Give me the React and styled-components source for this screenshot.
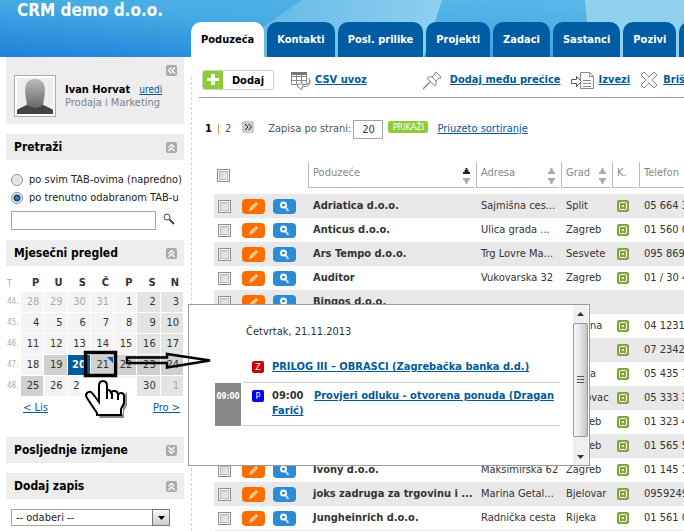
import React from "react";
import styled, { createGlobalStyle } from "styled-components";

const GlobalStyle = createGlobalStyle`
  * {
    box-sizing: border-box;
  }
  body {
    margin: 0;
    background: #fff;
    color: #333;
    font-family: Tahoma, "DejaVu Sans Condensed", "DejaVu Sans", sans-serif;
    font-size: 11px;
    line-height: 14px;
  }
  button, input, select {
    font-family: inherit;
    font-size: 11px;
    margin: 0;
  }
  a {
    color: #005a9c;
  }
`;

const Page = styled.div`
  position: relative;
  height: 100vh;
  display: flex;
  flex-direction: column;
  overflow: hidden;
`;

/* header */
const Header = styled.header`
  position: relative;
  flex: none;
  display: grid;
  grid-template-columns: 191px 1fr;
  height: 57px;
  overflow: hidden;
`;
const Sky = styled.svg`
  position: absolute;
  left: 0;
  top: 0;
  width: 100%;
  height: 100%;
`;
const Brand = styled.h1`
  position: relative;
  margin: 0;
  padding-left: 17px;
  color: #fff;
  font-size: 17px;
  line-height: 20px;
  white-space: nowrap;
`;
const Tabs = styled.nav`
  position: relative;
  display: flex;
  align-items: flex-end;
  gap: 3px;
  min-width: 0;
`;
const Tab = styled.a`
  flex: none;
  height: 35px;
  padding: 0 10px;
  border-radius: 10px 10px 0 0;
  background: ${(p) => (p.$active ? "#fff" : "#005da3")};
  color: ${(p) => (p.$active ? "#000" : "#fff")};
  font-weight: bold;
  line-height: 36px;
  text-decoration: none;
  white-space: nowrap;
`;

const Body = styled.div`
  flex: 1;
  display: flex;
  min-height: 0;
`;

/* sidebar */
const Sidebar = styled.aside`
  flex: none;
  width: 191px;
  padding: 0 7px 0 6px;
`;
const UserBox = styled.section`
  display: flex;
  align-items: flex-start;
  height: 67px;
  padding: 18px 7px 0 8px;
  background: #ededed;
`;
const Avatar = styled.svg`
  flex: none;
  width: 42px;
  height: 42px;
  padding: 1px;
  border: 1px solid #aaa;
  background: #fff;
`;
const UserText = styled.div`
  flex: 1;
  padding: 8px 0 0 9px;
  line-height: 13px;
  color: #80808c;
  white-space: nowrap;
  a {
    margin-left: 6px;
    font-size: 10px;
  }
  strong {
    color: #000;
  }
`;
const ToggleButton = styled.button`
  flex: none;
  width: 11px;
  height: 11px;
  padding: 0;
  border: 0;
  border-radius: 2px;
  background: #aaa;
  color: #fff;
  svg {
    display: block;
    transform: rotate(${(p) => p.$turn || 0}deg);
  }
`;
const UserToggle = styled.div`
  width: 11px;
  margin: -10px 0 0 -11px;
`;
const PanelHead = styled.header`
  display: flex;
  align-items: center;
  justify-content: space-between;
  height: 26px;
  margin-top: 10px;
  padding: 0 7px 0 8px;
  background: #ededed;
`;
const PanelTitle = styled.h2`
  margin: 0;
  color: #000;
  font-size: 12px;
  line-height: 16px;
`;
const SearchForm = styled.form`
  display: flex;
  flex-wrap: wrap;
  align-items: center;
  padding: 11px 0 0 5px;
`;
const RadioLabel = styled.label`
  display: flex;
  align-items: center;
  width: 100%;
  height: 18px;
  gap: 6px;
  color: #222;
  white-space: nowrap;
`;
const Radio = styled.input`
  appearance: none;
  width: 12px;
  height: 12px;
  border: 1px solid #8e8f8f;
  border-radius: 50%;
  background: radial-gradient(circle, #ddd, #f4f4f4);
  &:checked {
    background: radial-gradient(circle, #4aa5df 0, #0c3c78 3px, #eee 4px);
  }
`;
const SearchInput = styled.input`
  width: 145px;
  height: 19px;
  margin: 4px 7px 0 0;
  border: 1px solid #a5a5b0;
`;
const IconButton = styled.button`
  width: 12px;
  height: 12px;
  padding: 0;
  border: 0;
  background: none;
  svg {
    display: block;
  }
`;

/* calendar */
const CalendarTable = styled.table`
  width: 100%;
  margin-top: 8px;
  table-layout: fixed;
  border-spacing: 1px;
  font-size: 11px;
  th {
    height: 16px;
    padding: 0 4px 0 0;
    text-align: right;
    color: #333;
  }
  th:first-child {
    width: 13px;
    padding: 0;
    color: #aaa;
    font-weight: normal;
    text-align: left;
    font-size: 9px;
  }
`;
const dayColors = {
  off: ["#f4f4f4", "#aaa"],
  day: ["#f4f4f4", "#333"],
  weekend: ["#e4e4e4", "#333"],
  weekendOff: ["#e4e4e4", "#aaa"],
  busy: ["#d0d0d0", "#333"],
  today: ["#005a9c", "#fff"],
};
const Day = styled.td`
  position: relative;
  height: 20px;
  padding: 0 4px 0 0;
  text-align: right;
  background: ${(p) => dayColors[p.$kind][0]};
  color: ${(p) => dayColors[p.$kind][1]};
  font-weight: ${(p) => (p.$kind === "today" ? "bold" : "normal")};
`;
const Week = styled.td`
  padding: 0;
  color: #aaa;
  font-size: 8px;
`;
const Marker = styled.svg`
  position: absolute;
  left: -7px;
  top: -6px;
  width: 130px;
  height: 72px;
  overflow: visible;
  z-index: 5;
  pointer-events: none;
`;
const MonthNav = styled.div`
  display: flex;
  justify-content: space-between;
  padding: 4px 4px 0 17px;
  margin-bottom: 22px;
`;
const AddSelect = styled.select`
  display: block;
  appearance: none;
  width: 159px;
  height: 17px;
  padding: 0 4px;
  color: #222;
  border: 1px solid #a5a5b0;
  border-radius: 0;
  background: #fff;
`;
const SelectWrap = styled.div`
  display: grid;
  width: 159px;
  margin: 10px 0 0 5px;
  > * {
    grid-area: 1 / 1;
  }
`;
const SelectArrow = styled.span`
  display: flex;
  align-items: center;
  justify-content: center;
  justify-self: end;
  width: 18px;
  height: 17px;
  border: 1px solid #777;
  background: linear-gradient(#f8f8f8, #ccc);
  z-index: 1;
  pointer-events: none;
`;

/* main */
const Main = styled.main`
  flex: 1;
  min-width: 0;
  margin-top: 20px;
  padding-left: 7px;
  border-left: 1px dashed #d4d4d4;
`;
const Toolbar = styled.div`
  display: flex;
  align-items: center;
  height: 41px;
  margin-top: -20px;
  padding: 6px 0 0 3px;
  border-bottom: 1px solid #999;
  overflow: hidden;
`;
const AddButton = styled.button`
  flex: none;
  display: flex;
  align-items: center;
  width: 72px;
  height: 20px;
  padding: 0;
  border: 1px solid #ccc;
  border-radius: 3px;
  background: #fff;
  color: #000;
  font-weight: bold;
  overflow: hidden;
  svg {
    flex: none;
    background: #8fcc33;
  }
  span {
    flex: 1;
  }
`;
const Tool = styled.a`
  flex: none;
  display: flex;
  align-items: center;
  gap: ${(p) => p.$gap || 4}px;
  margin-left: ${(p) => p.$left}px;
  font-weight: bold;
  white-space: nowrap;
`;
const Pager = styled.div`
  display: flex;
  align-items: center;
  height: 20px;
  margin-top: 21px;
  padding-left: 6px;
  white-space: nowrap;
  color: #555;
  b {
    color: #000;
  }
  i {
    width: 1px;
    height: 10px;
    margin: 0 6px;
    background: #e0953c;
  }
`;
const NextButton = styled.button`
  width: 12px;
  height: 12px;
  margin: -4px 14px 0 11px;
  padding: 0;
  border: 0;
  border-radius: 2px;
  background: #ccc;
  svg {
    display: block;
  }
`;
const CountInput = styled.input`
  width: 30px;
  height: 19px;
  margin: 0 5px 0 2px;
  padding: 0;
  border: 1px solid #a5a5b0;
  color: #333;
  text-align: center;
`;
const ShowButton = styled.button`
  width: 40px;
  height: 12px;
  margin: -4px 9px 0 0;
  padding: 0;
  border: 0;
  border-radius: 2px;
  background: #8fcc33;
  color: #fff;
  && {
    font-size: 9px;
  }
  line-height: 12px;
`;
const TableWrap = styled.div`
  margin: 23px 0 0 15px;
  overflow: hidden;
`;
const Table = styled.table`
  width: 585px;
  table-layout: fixed;
  border-collapse: collapse;
`;
const Th = styled.th`
  width: ${(p) => p.$w}px;
  height: 32px;
  padding: 0 2px 6px 0;
  font-weight: normal;
  text-align: left;
`;
const HeadCell = styled.div`
  display: flex;
  justify-content: space-between;
  height: 26px;
  padding: 4px 4px 0 4px;
  border-left: 1px solid #bbb;
  border-bottom: 1px solid #bbb;
  color: #888;
`;
const Row = styled.tr`
  height: 24px;
  background: ${(p) => (p.$odd ? "#e8e8e8" : "#fff")};
  td {
    padding: 0 0 0 5px;
    white-space: nowrap;
    overflow: hidden;
  }
  td:nth-child(-n + 3) {
    padding-left: 4px;
  }
  svg {
    display: block;
  }
`;
const Name = styled.td`
  font-weight: bold;
`;
const CheckBox = styled.input`
  appearance: none;
  display: block;
  width: 13px;
  height: 13px;
  border: 1px solid #8e8f8f;
  background: linear-gradient(135deg, #ccc, #f6f6f6);
  box-shadow: inset 0 0 0 1px #f4f4f4, inset 0 0 0 2px #bbb;
`;
const HeadCheck = styled.div`
  padding-left: 3px;
`;
const RowButton = styled.button`
  display: flex;
  align-items: center;
  justify-content: center;
  width: 23px;
  height: 15px;
  padding: 0;
  border: 0;
  border-radius: 4px;
  background: ${(p) => p.$color};
`;

/* day popup */
const Popup = styled.section`
  position: absolute;
  left: 188px;
  top: 304px;
  z-index: 3;
  display: flex;
  width: 402px;
  height: 162px;
  border: 1px solid #999;
  background: #fff;
`;
const PopupBody = styled.div`
  flex: 1;
  padding: 20px 13px 0 26px;
`;
const PopupDate = styled.p`
  margin: 0 0 15px 31px;
`;
const Task = styled.div`
  display: grid;
  grid-template-columns: 26px 1fr;
  gap: 2px;
`;
const TaskTime = styled.span`
  padding-top: 7px;
  background: ${(p) => (p.$on ? "#888" : "none")};
  color: #fff;
  font-size: 8px;
  font-weight: bold;
  text-align: center;
`;
const TaskText = styled.div`
  display: flex;
  gap: 8px;
  padding: ${(p) => (p.$tall ? "5px 0 7px 9px" : "5px 0 8px 9px")};
  border-bottom: 1px solid #ccc;
  font-weight: bold;
  line-height: 15px;
  span {
    margin-right: 7px;
  }
`;
const Tag = styled.i`
  flex: none;
  width: 12px;
  height: 12px;
  margin-top: 2px;
  border-radius: 2px;
  background: ${(p) => p.$color};
  color: #fff;
  font-size: 9px;
  font-style: normal;
  font-weight: normal;
  line-height: 12px;
  text-align: center;
`;
const ScrollBar = styled.div`
  display: flex;
  flex-direction: column;
  width: 15px;
  margin-right: 1px;
  background: #f0f0f0;
  svg {
    flex: none;
    display: block;
  }
`;
const Thumb = styled.div`
  flex: 1;
  display: flex;
  align-items: center;
  justify-content: center;
  border: 1px solid #999;
  border-radius: 2px;
  background: linear-gradient(90deg, #f6f6f6, #e8e8e8 45%, #c4c4c4);
`;

const tabs = ["Poduzeća", "Kontakti", "Posl. prilike", "Projekti", "Zadaci", "Sastanci", "Pozivi", ""];

const weeks = [
  ["44.", ["28", "off"], ["29", "off"], ["30", "off"], ["31", "off"], ["1", "day"], ["2", "weekend"], ["3", "weekend"]],
  ["45.", ["4", "day"], ["5", "day"], ["6", "day"], ["7", "day"], ["8", "day"], ["9", "weekend"], ["10", "weekend"]],
  ["46.", ["11", "day"], ["12", "day"], ["13", "day"], ["14", "day"], ["15", "day"], ["16", "weekend"], ["17", "weekend"]],
  ["47.", ["18", "day"], ["19", "busy"], ["20", "today"], ["21", "busy"], ["22", "busy"], ["23", "busy"], ["24", "busy"]],
  ["48.", ["25", "busy"], ["26", "day"], ["27", "day"], ["28", "day"], ["29", "day"], ["30", "weekend"], ["1", "weekendOff"]],
];

const companies = [
  ["Adriatica d.o.o.", "Sajmišna ces...", "Split", "05 664 3"],
  ["Anticus d.o.o.", "Ulica grada ...", "Zagreb", "01 560 0"],
  ["Ars Tempo d.o.o.", "Trg Lovre Ma...", "Sesvete", "095 8690"],
  ["Auditor", "Vukovarska 32", "Zagreb", "01 / 30 4"],
  ["Bingos d.o.o.", "", "", ""],
  ["", "", "Gradna", "04 1231"],
  ["", "", "", "07 2342"],
  ["", "", "Rijeka", "05 435 7"],
  ["", "", "Karlovac", "05 333 3"],
  ["", "", "Zagreb", "01 323 4"],
  ["", "", "Zagreb", "01 565 5"],
  ["Ivony d.o.o.", "Maksimirska 62", "Zagreb", "01 145 1"],
  ["joks zadruga za trgovinu i ...", "Marina Getal...", "Bjelovar", "0959249"],
  ["Jungheinrich d.o.o.", "Radnička cesta", "Rijeka", "01 561 0"],
  ["", "", "", ""],
];

function Toggle({ turn, label }) {
  return (
    <ToggleButton $turn={turn} aria-label={label}>
      <svg width="11" height="11" fill="none" stroke="currentColor" strokeWidth="1.4">
        <path d="M2.5 5.5 5.5 2.5 8.5 5.5M2.5 9 5.5 6 8.5 9" />
      </svg>
    </ToggleButton>
  );
}

function Panel({ title, closed, children }) {
  return (
    <section>
      <PanelHead>
        <PanelTitle>{title}</PanelTitle>
        <Toggle turn={closed ? 180 : 0} label={title} />
      </PanelHead>
      {children}
    </section>
  );
}

function Sort({ up }) {
  return (
    <svg width="7" height="20" fill="#aaa">
      <path d="M2.5 2h2v2h1v2h1.5v2H0V6h1.5V4h1z" fill={up ? "#222" : "#aaa"} />
      <path d="M0 12h7v2H5.500v2h-1v2h-2v-2h-1v-2H0z" />
    </svg>
  );
}

function DayMarker() {
  return (
    <Marker viewBox="0 0 130 72">
      <path d="M23 8h6v6z" fill="#005a9c" />
      <path d="M-4 29h57v43H-4z" fill="#fff" />
      <rect x="1.500" y="3.500" width="30" height="23" fill="none" stroke="#000" strokeWidth="3.500" />
      <path d="M43 8.500h40V5l43 6.500-43 7v-4.500H43z" fill="none" stroke="#000" strokeWidth="2.500" />
      <g transform="translate(0 -2)">
        <path d="M14 67h25V52l4-8v14l-3 6v7H16z" fill="#888" />
        <path
          d="M19 34q-4 0-4 5v16l-6-8q-3-4-6-1-2 2 0 5l10 15v2h24v-6l3-6V49q0-3-3-3-2 0-3 2 0-4-4-4-3 0-3 3 0-4-3-4-1 0-1 2v-6q0-5-4-5z"
          fill="#fff"
          stroke="#000"
          strokeWidth="2"
        />
        <path d="M23 43v9M28 46v6M34 48v5" stroke="#000" strokeWidth="2" />
      </g>
    </Marker>
  );
}

function Calendar() {
  return (
    <>
      <CalendarTable>
        <thead>
          <tr>
            {["T", "P", "U", "S", "Č", "P", "S", "N"].map((d, i) => (
              <th key={i}>{d}</th>
            ))}
          </tr>
        </thead>
        <tbody>
          {weeks.map(([week, ...days]) => (
            <tr key={week}>
              <Week>{week}</Week>
              {days.map(([n, kind]) => (
                <Day key={n} $kind={kind}>
                  {n}
                  {n === "21" && <DayMarker />}
                </Day>
              ))}
            </tr>
          ))}
        </tbody>
      </CalendarTable>
      <MonthNav>
        <a href="#lis">&lt; Lis</a>
        <a href="#pro">Pro &gt;</a>
      </MonthNav>
    </>
  );
}

function Companies() {
  return (
    <TableWrap>
      <Table>
        <thead>
          <tr>
            <Th $w={24}>
              <HeadCheck>
                <CheckBox type="checkbox" aria-label="Sve" />
              </HeadCheck>
            </Th>
            <Th $w={31} />
            <Th $w={39} />
            <Th $w={168}>
              <HeadCell>
                Poduzeće <Sort up />
              </HeadCell>
            </Th>
            <Th $w={85}>
              <HeadCell>
                Adresa <Sort />
              </HeadCell>
            </Th>
            <Th $w={51}>
              <HeadCell>
                Grad <Sort />
              </HeadCell>
            </Th>
            <Th $w={27}>
              <HeadCell>K.</HeadCell>
            </Th>
            <Th $w={160}>
              <HeadCell>Telefon</HeadCell>
            </Th>
          </tr>
        </thead>
        <tbody>
          {companies.map(([name, address, city, phone], i) => (
            <Row key={i} $odd={i % 2 === 0}>
              <td>
                <CheckBox type="checkbox" aria-label={name || "Odaberi"} />
              </td>
              <td>
                <RowButton $color="#ff6d00" aria-label="Uredi">
                  <svg width="11" height="11">
                    <path d="M1 10 2 7 8 1 10 3 4 9z" fill="#ffe4c4" />
                    <path d="M3 8 8.500 2.500" stroke="#ff9a4a" />
                  </svg>
                </RowButton>
              </td>
              <td>
                <RowButton $color="#2b8bd6" aria-label="Pregled">
                  <svg width="11" height="11" fill="none" stroke="#fff">
                    <circle cx="4.500" cy="4" r="2.500" strokeWidth="2" />
                    <path d="M6.500 6.500 9.500 10" strokeWidth="2" stroke="#b8dcf6" />
                  </svg>
                </RowButton>
              </td>
              <Name>{name}</Name>
              <td>{address}</td>
              <td>{city}</td>
              <td>
                {phone && (
                  <svg width="12" height="12" fill="none">
                    <rect width="12" height="12" rx="2" fill="#82a53c" />
                    <rect x="2.500" y="2.500" width="7" height="7" rx="1" stroke="#fff" />
                    <rect x="5" y="5" width="2" height="2" fill="#fff" />
                  </svg>
                )}
              </td>
              <td>{phone}</td>
            </Row>
          ))}
        </tbody>
      </Table>
    </TableWrap>
  );
}

function DayPopup() {
  return (
    <Popup>
      <PopupBody>
        <PopupDate>Četvrtak, 21.11.2013</PopupDate>
        <Task>
          <TaskTime />
          <TaskText>
            <Tag $color="#c00">Z</Tag>
            <a href="#prilog">PRILOG III – OBRASCI (Zagrebačka banka d.d.)</a>
          </TaskText>
        </Task>
        <Task>
          <TaskTime $on>09:00</TaskTime>
          <TaskText $tall>
            <Tag $color="#00f">P</Tag>
            <div>
              <span>09:00</span>{" "}
              <a href="#ponuda">Provjeri odluku - otvorena ponuda (Dragan Farić)</a>
            </div>
          </TaskText>
        </Task>
      </PopupBody>
      <ScrollBar>
        <svg width="15" height="18">
          <path d="M4 11h7L7.500 7z" fill="#333" />
        </svg>
        <Thumb>
          <svg width="7" height="8" stroke="#555">
            <path d="M0 .5h7M0 3.500h7M0 6.500h7" />
          </svg>
        </Thumb>
        <svg width="15" height="28">
          <path d="M4 18h7L7.500 22z" fill="#333" />
        </svg>
      </ScrollBar>
    </Popup>
  );
}

function App() {
  return (
    <Page>
      <GlobalStyle />
      <Header>
        <Sky viewBox="0 0 684 57" preserveAspectRatio="none">
          <defs>
            <linearGradient id="sky" x1="0" x2="1" y1="1" y2="0">
              <stop offset="0" stopColor="#1f80da" />
              <stop offset=".5" stopColor="#45abe3" />
              <stop offset="1" stopColor="#5cbae8" />
            </linearGradient>
            <linearGradient id="beam" x1="0" x2="1">
              <stop offset="0" stopColor="#5cb5e6" />
              <stop offset="1" stopColor="#8dcfef" />
            </linearGradient>
          </defs>
          <path d="M0 0h684v57H0z" fill="url(#sky)" />
          <path d="M302 0h140l-18 57H220z" fill="url(#beam)" />
          <path d="M585 0h99v57h-94z" fill="#90d0ef" />
        </Sky>
        <Brand>CRM demo d.o.o.</Brand>
        <Tabs>
          {tabs.map((tab, i) => (
            <Tab key={i} href={"#tab" + i} $active={i === 0}>
              {tab}
            </Tab>
          ))}
        </Tabs>
      </Header>
      <Body>
        <Sidebar>
          <UserBox>
            <Avatar viewBox="0 0 38 38">
              <defs>
                <linearGradient id="face" x1="0" x2="0" y1="0" y2="1">
                  <stop offset="0" stopColor="#bbb" />
                  <stop offset="1" stopColor="#555" />
                </linearGradient>
              </defs>
              <path d="M1 1h36v36H1z" fill="#eee" />
              <path d="M1 37v-4q5-3 10-5l-1-6Q6 2 19 2t9 20l-1 6q5 2 10 5v4z" fill="url(#face)" />
              <path d="M1 37v-4q5-3 10-5 8 6 16 0 5 2 10 5v4z" fill="#444" />
            </Avatar>
            <UserText>
              <strong>Ivan Horvat</strong> <a href="#uredi">uredi</a>
              <div>Prodaja i Marketing</div>
            </UserText>
            <UserToggle>
              <Toggle turn={-90} label="Sakrij" />
            </UserToggle>
          </UserBox>
          <Panel title="Pretraži">
            <SearchForm>
              <RadioLabel>
                <Radio type="radio" name="scope" />
                po svim TAB-ovima (napredno)
              </RadioLabel>
              <RadioLabel>
                <Radio type="radio" name="scope" defaultChecked />
                po trenutno odabranom TAB-u
              </RadioLabel>
              <SearchInput aria-label="Pretraži" />
              <IconButton type="button" aria-label="Traži">
                <svg width="12" height="12" fill="none" stroke="#444">
                  <circle cx="4" cy="4" r="3" />
                  <path d="M6.500 6.500 11 11" strokeWidth="2" />
                </svg>
              </IconButton>
            </SearchForm>
          </Panel>
          <Panel title="Mjesečni pregled">
            <Calendar />
          </Panel>
          <Panel title="Posljednje izmjene" closed />
          <Panel title="Dodaj zapis">
            <SelectWrap>
              <AddSelect aria-label="Dodaj zapis">
                <option>-- odaberi --</option>
              </AddSelect>
              <SelectArrow>
                <svg width="7" height="4">
                  <path d="M0 0h7L3.500 4z" />
                </svg>
              </SelectArrow>
            </SelectWrap>
          </Panel>
        </Sidebar>
        <Main>
          <Toolbar>
            <AddButton>
              <svg width="20" height="20">
                <path d="M8 4h4v4h4v3h-4v4H8v-4H4V8h4z" fill="#fff" />
              </svg>
              <span>Dodaj</span>
            </AddButton>
            <Tool href="#csv" $left={17}>
              <svg width="20" height="19" fill="none" stroke="#888">
                <path d="M.5 1.500h15v12H.5zM.5 5.500h15M.5 9.500h15M5.500 2v11M10.500 2v11" />
                <path d="M0 1h16v3H0z" fill="#777" stroke="none" />
                <path d="M18 7q3 7-7 7v-3l-5 4 5 4v-3q9 0 8-7" fill="#fff" />
              </svg>
              CSV uvoz
            </Tool>
            <Tool href="#precice" $left={56} $gap={8}>
              <svg width="19" height="19" fill="#fff" stroke="#888">
                <path d="M0 18 7 11" strokeWidth="1.500" />
                <path d="M4 7q2-2 5-1l3-3q-1-2 1-2l5 5q0 2-2 1l-3 3q1 3-1 5z" />
                <path d="M9 6l4 4" />
              </svg>
              Dodaj među prećice
            </Tool>
            <Tool href="#izvezi" $left={10}>
              <svg width="24" height="19" fill="#fff" stroke="#888">
                <path d="M9.500 1.500h9l4 4v12h-13zM18.500 1.500v4h4M12 9.500h8M12 12.500h8M12 15.500h8" />
                <path d="M.5 8.500h5v-3l5 5-5 5v-3h-5z" stroke="#555" />
              </svg>
              Izvezi
            </Tool>
            <Tool href="#brisi" $left={10} $gap={5}>
              <svg width="18" height="18" fill="#fff" stroke="#888">
                <path d="M1 4 4 1l5 5 5-5 3 3-5 5 5 5-3 3-5-5-5 5-3-3 5-5z" />
              </svg>
              Briši
            </Tool>
          </Toolbar>
          <Pager>
            <b>1</b>
            <i />2
            <NextButton aria-label="Sljedeća">
              <svg width="12" height="12" fill="none" stroke="#222">
                <path d="M3 3l3 3-3 3M6.500 3l3 3-3 3" />
              </svg>
            </NextButton>
            <label htmlFor="perPage">Zapisa po strani:</label>
            <CountInput id="perPage" defaultValue="20" />
            <ShowButton>PRIKAŽI</ShowButton>
            <a href="#sort">Priuzeto sortiranje</a>
          </Pager>
          <Companies />
        </Main>
      </Body>
      <DayPopup />
    </Page>
  );
}

export default App;
